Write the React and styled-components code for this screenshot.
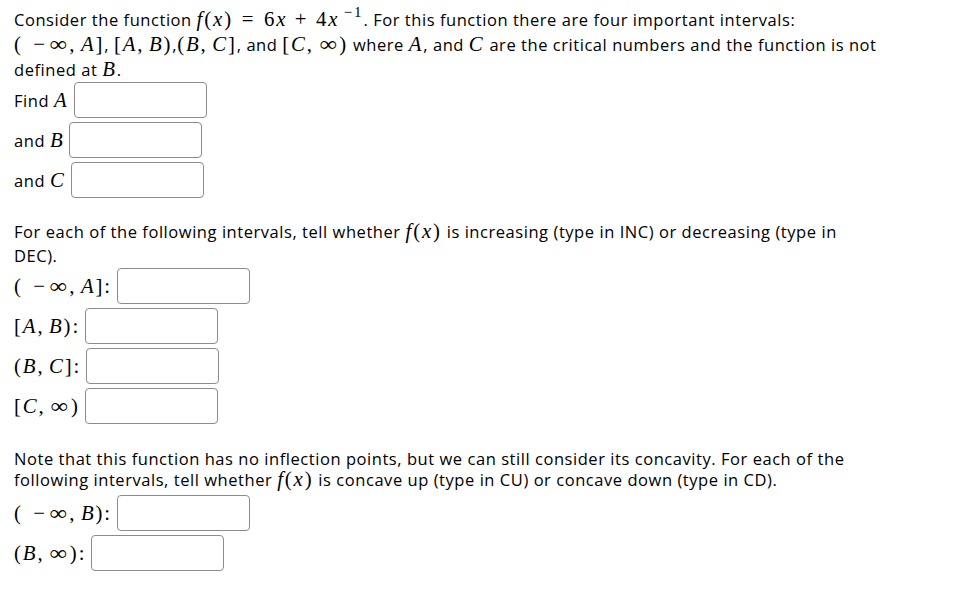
import React from "react";
import styled, { createGlobalStyle } from "styled-components";

const Global = createGlobalStyle`
  html, body { margin: 0; padding: 0; background: #fff; }
  body { font-family: "Open Sans", "Noto Sans", sans-serif; color: #000; }
`;

const Page = styled.div`
  padding: 7px 14px 0 14px;
  font-size: 16.5px;
  letter-spacing: 0.55px;
  width: 940px;
  box-sizing: border-box;
`;

const Para = styled.p`
  margin: 0;
  line-height: ${(p) => p.$lh || 25}px;
  margin-top: ${(p) => p.$mt || 0}px;
  white-space: nowrap;
`;

const M = styled.span`
  font-family: "Liberation Serif", "DejaVu Serif", serif;
  font-size: 1.26em;
  letter-spacing: 0.09em;
  line-height: 0;
  white-space: nowrap;
`;

const I = styled.i`
  font-style: italic;
`;

const Inf = styled.span`
  display: inline-block;
  transform: scaleX(1.2);
  margin: 0 0.1em;
`;

const Bin = styled.span`
  margin: 0 0.36em;
`;

const Rel = styled.span`
  margin: 0 0.42em;
`;

const Neg = styled.span`
  margin: 0 0.08em 0 0.5em;
`;

const Thin = styled.span`
  margin-right: 0.22em;
`;

const Sup = styled.sup`
  font-size: 0.72em;
  vertical-align: 0.6em;
  line-height: 0;
  margin-left: 0.3em;
`;

const Row = styled.div`
  display: flex;
  align-items: center;
  gap: 5px;
  height: 36px;
  margin-top: ${(p) => p.$mt || 0}px;
  margin-bottom: 4px;
`;

const Label = styled.span`
  white-space: nowrap;
`;

const Box = styled.input`
  box-sizing: border-box;
  width: 133px;
  height: 36px;
  border: 1px solid #8c8c8c;
  border-radius: 4px;
  background: #fff;
  margin: 0;
  padding: 0 6px;
  font: inherit;
`;

const Field = ({ children, mt }) => (
  <Row $mt={mt}>
    <Label>{children}</Label>
    <Box type="text" />
  </Row>
);

const Comma = () => <Thin>,</Thin>;
const Infinity = () => <Inf>∞</Inf>;
const NegInf = () => (
  <>
    <Neg>−</Neg>
    <Infinity />
  </>
);

export default function App() {
  return (
    <>
      <Global />
      <Page>
        <Para $lh={25}>
          Consider the function{" "}
          <M>
            <I>f</I>(<I>x</I>)<Rel>=</Rel>6<I>x</I>
            <Bin>+</Bin>4<I>x</I>
            <Sup>−1</Sup>
          </M>
          . For this function there are four important intervals:
          <br />
          <M>
            (<NegInf /><Comma /><I>A</I>]
          </M>
          ,{" "}
          <M>
            [<I>A</I><Comma /><I>B</I>)
          </M>
          ,
          <M>
            (<I>B</I><Comma /><I>C</I>]
          </M>
          , and{" "}
          <M>
            [<I>C</I><Comma /><Infinity />)
          </M>{" "}
          where <M><I>A</I></M>, and <M><I>C</I></M> are the critical numbers and the function is not
          <br />
          defined at <M><I>B</I></M>.
        </Para>
        <Field>
          Find <M><I>A</I></M>
        </Field>
        <Field>
          and <M><I>B</I></M>
        </Field>
        <Field>
          and <M><I>C</I></M>
        </Field>
        <Para $lh={24} $mt={22}>
          For each of the following intervals, tell whether{" "}
          <M>
            <I>f</I>(<I>x</I>)
          </M>{" "}
          is increasing (type in INC) or decreasing (type in
          <br />
          DEC).
        </Para>
        <Field mt={0}>
          <M>
            (<NegInf /><Comma /><I>A</I>]:
          </M>
        </Field>
        <Field>
          <M>
            [<I>A</I><Comma /><I>B</I>):
          </M>
        </Field>
        <Field>
          <M>
            (<I>B</I><Comma /><I>C</I>]:
          </M>
        </Field>
        <Field>
          <M>
            [<I>C</I><Comma /><Infinity />)
          </M>
        </Field>
        <Para $lh={21} $mt={24}>
          Note that this function has no inflection points, but we can still consider its concavity. For each of the
          <br />
          following intervals, tell whether{" "}
          <M>
            <I>f</I>(<I>x</I>)
          </M>{" "}
          is concave up (type in CU) or concave down (type in CD).
        </Para>
        <Field mt={5}>
          <M>
            (<NegInf /><Comma /><I>B</I>):
          </M>
        </Field>
        <Field>
          <M>
            (<I>B</I><Comma /><Infinity />):
          </M>
        </Field>
      </Page>
    </>
  );
}
